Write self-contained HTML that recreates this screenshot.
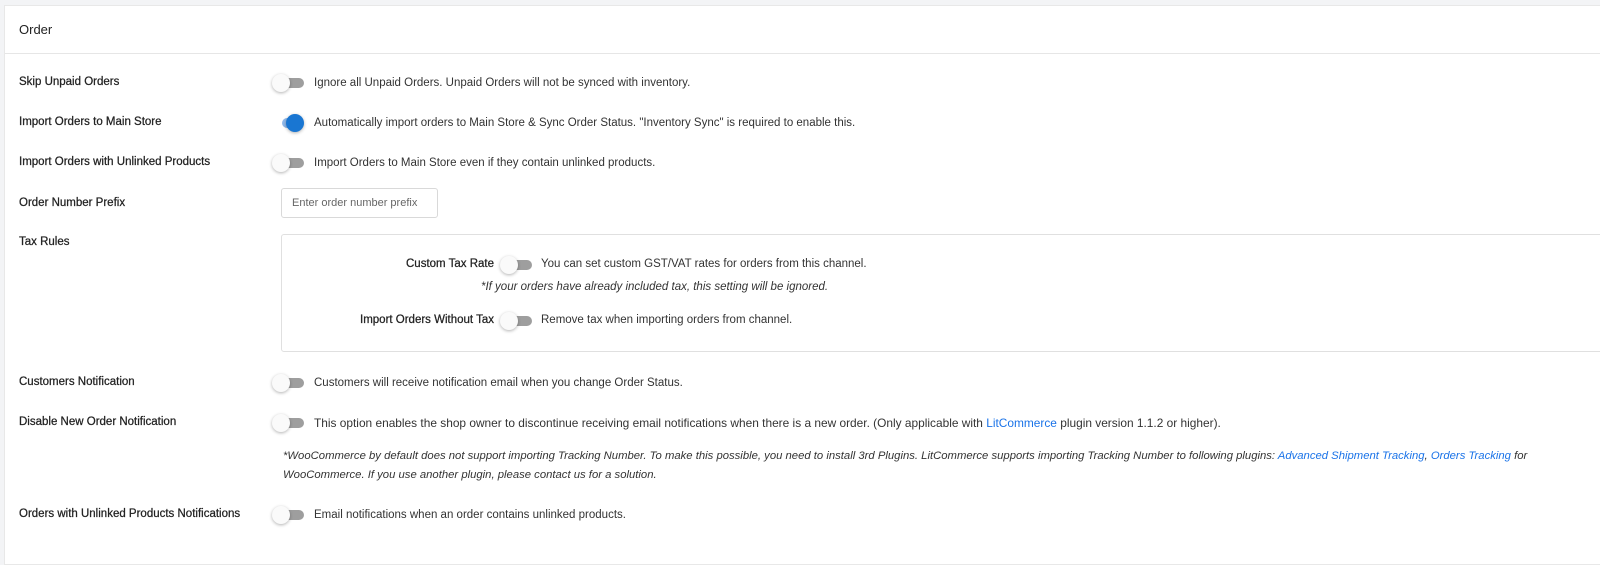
<!DOCTYPE html>
<html><head><style>
*{margin:0;padding:0;box-sizing:border-box}
body{width:1600px;height:561px;background:#f3f4f6;font-family:"Liberation Sans",sans-serif;color:#333;position:relative;overflow:hidden}
.card{position:absolute;left:4px;top:5px;width:1600px;height:560px;background:#fff;border:1px solid #e8e8e8}
.hd{position:absolute;left:0;top:0;right:0;height:48px;border-bottom:1px solid #e6e6e6}
.hd span{position:absolute;left:14px;top:16px;font-size:13px;color:#222}
.t{position:absolute;white-space:nowrap;line-height:14px}
.lb{color:#222;font-size:11.5px;-webkit-text-stroke:0.25px #222}
.d{color:#333;font-size:11.5px}
.i{font-style:italic;font-size:10.8px;color:#333}
a{color:#1a73e8;text-decoration:none}
.tg{position:absolute;width:34px;height:20px}
.tg .tr{position:absolute;left:10px;top:5px;width:22px;height:10px;border-radius:5px;background:#9e9e9e}
.tg .kn{position:absolute;left:0;top:1px;width:18px;height:18px;border-radius:50%;background:#fafafa;box-shadow:0 1px 3px rgba(0,0,0,.3)}
.tg.on .tr{background:#8fb8ea}
.tg.on .kn{left:14px;background:#1976d2}
</style></head><body>
<div class="card">
<div class="hd"><span>Order</span></div>
</div>
<div class="t lb" style="left:19px;top:75px">Skip Unpaid Orders</div>
<div class="tg" style="left:272px;top:73px"><div class="tr"></div><div class="kn"></div></div>
<div class="t d" style="left:314px;top:76px">Ignore all Unpaid Orders. Unpaid Orders will not be synced with inventory.</div>

<div class="t lb" style="left:19px;top:115px">Import Orders to Main Store</div>
<div class="tg on" style="left:272px;top:113px"><div class="tr"></div><div class="kn"></div></div>
<div class="t d" style="left:314px;top:116px">Automatically import orders to Main Store &amp; Sync Order Status. "Inventory Sync" is required to enable this.</div>

<div class="t lb" style="left:19px;top:155px">Import Orders with Unlinked Products</div>
<div class="tg" style="left:272px;top:153px"><div class="tr"></div><div class="kn"></div></div>
<div class="t d" style="left:314px;top:156px">Import Orders to Main Store even if they contain unlinked products.</div>

<div class="t lb" style="left:19px;top:196px">Order Number Prefix</div>
<div style="position:absolute;left:281px;top:188px;width:157px;height:30px;border:1px solid #d9d9d9;border-radius:3px"></div>
<div class="t d" style="left:292px;top:196px;color:#666;font-size:11px">Enter order number prefix</div>

<div class="t lb" style="left:19px;top:235px">Tax Rules</div>
<div style="position:absolute;left:281px;top:234px;width:1330px;height:118px;border:1px solid #e0e0e0;border-radius:3px"></div>
<div class="t lb" style="right:1106px;top:257px">Custom Tax Rate</div>
<div class="tg" style="left:500px;top:255px"><div class="tr"></div><div class="kn"></div></div>
<div class="t d" style="left:541px;top:257px">You can set custom GST/VAT rates for orders from this channel.</div>
<div class="t i" style="left:481px;top:280px;font-size:11.5px">*If your orders have already included tax, this setting will be ignored.</div>
<div class="t lb" style="right:1106px;top:313px">Import Orders Without Tax</div>
<div class="tg" style="left:500px;top:311px"><div class="tr"></div><div class="kn"></div></div>
<div class="t d" style="left:541px;top:313px">Remove tax when importing orders from channel.</div>

<div class="t lb" style="left:19px;top:375px">Customers Notification</div>
<div class="tg" style="left:272px;top:373px"><div class="tr"></div><div class="kn"></div></div>
<div class="t d" style="left:314px;top:376px">Customers will receive notification email when you change Order Status.</div>

<div class="t lb" style="left:19px;top:415px">Disable New Order Notification</div>
<div class="tg" style="left:272px;top:413px"><div class="tr"></div><div class="kn"></div></div>
<div class="t d" style="left:314px;top:416px;font-size:11.9px">This option enables the shop owner to discontinue receiving email notifications when there is a new order. (Only applicable with <a>LitCommerce</a> plugin version 1.1.2 or higher).</div>
<div class="t i" style="left:283px;top:449px;font-size:11.3px">*WooCommerce by default does not support importing Tracking Number. To make this possible, you need to install 3rd Plugins. LitCommerce supports importing Tracking Number to following plugins: <a>Advanced Shipment Tracking</a>, <a>Orders Tracking</a> for</div>
<div class="t i" style="left:283px;top:468px;font-size:11.3px">WooCommerce. If you use another plugin, please contact us for a solution.</div>

<div class="t lb" style="left:19px;top:507px">Orders with Unlinked Products Notifications</div>
<div class="tg" style="left:272px;top:505px"><div class="tr"></div><div class="kn"></div></div>
<div class="t d" style="left:314px;top:508px">Email notifications when an order contains unlinked products.</div>
</body></html>
